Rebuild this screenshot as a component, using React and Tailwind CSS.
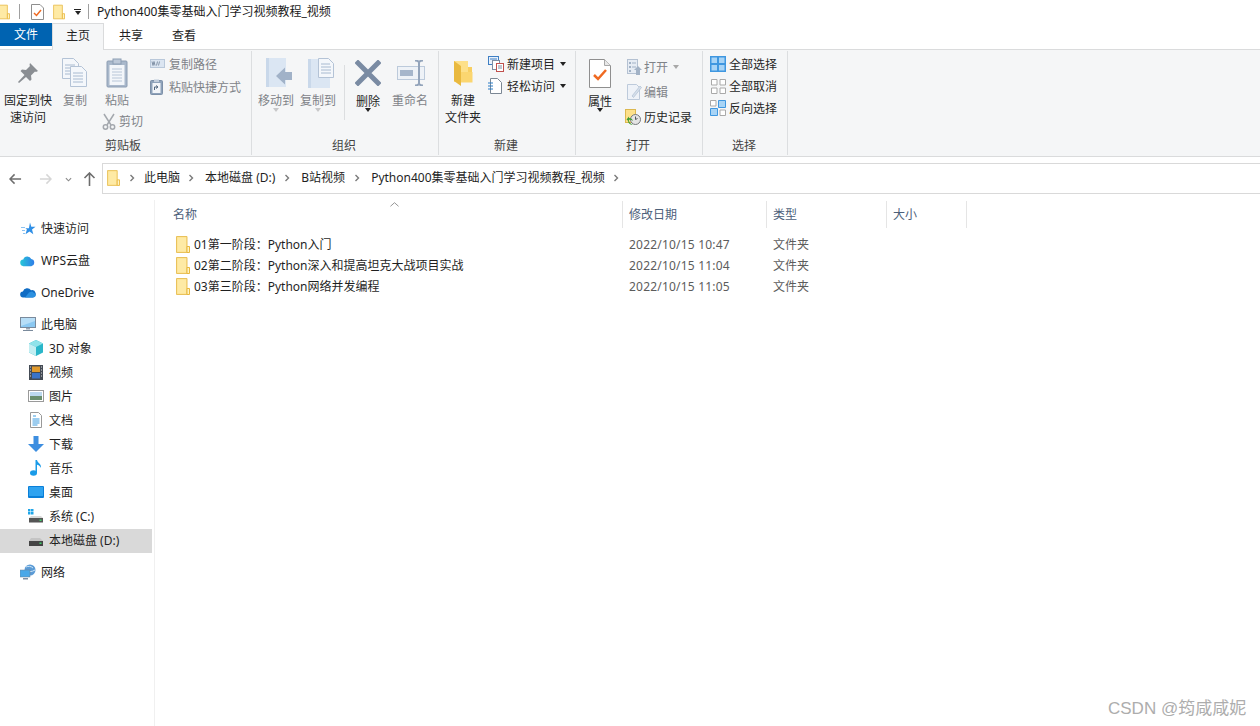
function Folder({ className = "w-[14px] h-[17px]" }) {
  return (
    <svg viewBox="0 0 14 17" className={className}>
      <path d="M.5.5h10.5v16H.5z" fill="#fde08a" stroke="#e9c25c" />
      <path d="M1.5 1.5h8.5v14H1.5z" fill="#feeaa5" />
      <path d="M11 10.5h2.5v6H11z" fill="#fff3c4" stroke="#e9b93f" />
    </svg>
  );
}
function Pin() {
  return (
    <svg viewBox="0 0 22 22" className="w-[22px] h-[22px]">
      <path d="M13 1l8 8-2 1-1-.5-4 4 .5 4-1.500 1.500-4-4L2 21l-1-1 6.500-7-4-4L5 7.500l4 .5 4-4-.5-1z" fill="#8a8e93" />
    </svg>
  );
}
function DocLines({ x, y }) {
  return (
    <g>
      <path d={`M${x}.5 ${y}.5h11l5 5v15h-16z`} fill="#f4f7fb" stroke="#b4c3d6" />
      <path d={`M${x + 3} ${y + 7}h10M${x + 3} ${y + 10}h10M${x + 3} ${y + 13}h10M${x + 3} ${y + 16}h10`} stroke="#a8bad0" />
    </g>
  );
}
function CopyIcon() {
  return (
    <svg viewBox="0 0 26 30" className="w-[26px] h-[30px]">
      <DocLines x={0} y={0} />
      <DocLines x={8} y={8} />
    </svg>
  );
}
function PasteIcon() {
  return (
    <svg viewBox="0 0 22 30" className="w-[22px] h-[30px]">
      <rect x="1" y="3" width="20" height="26" rx="1" fill="#a9b8cb" stroke="#8c9db3" />
      <rect x="3.500" y="7" width="15" height="20" fill="#f3f6fa" />
      <path d="M6 11h10M6 14h10M6 17h10M6 20h10M6 23h10" stroke="#b8c6d8" />
      <rect x="7" y="1" width="8" height="5" fill="#bcc8d8" stroke="#8c9db3" />
    </svg>
  );
}
function Scissors() {
  return (
    <svg viewBox="0 0 14 17" className="w-[14px] h-[17px]" fill="none" stroke="#a4a8ae" strokeWidth="1.500">
      <path d="M2 1l7 11M12 1L5 12" />
      <circle cx="3.500" cy="14" r="2.200" />
      <circle cx="10.500" cy="14" r="2.200" />
    </svg>
  );
}
function PathIcon() {
  return (
    <svg viewBox="0 0 15 10" className="w-[15px] h-[10px]">
      <rect x=".5" y=".5" width="14" height="8" fill="#dbe5f1" stroke="#b9c8da" />
      <path d="M2 2.500l1 4 1-4 1 4M6.500 6.500l1-4M8.500 6.500l1-4" stroke="#6d7f95" fill="none" strokeWidth=".8" />
    </svg>
  );
}
function ShortcutIcon() {
  return (
    <svg viewBox="0 0 13 16" className="w-[13px] h-[16px]">
      <rect x=".5" y="1.500" width="12" height="14" rx="1" fill="#8ea2ba" stroke="#7d90a8" />
      <rect x="2.500" y="4" width="8" height="10" fill="#f2f5f9" />
      <rect x="4" y=".5" width="5" height="2.500" fill="#c0ccdb" />
      <path d="M4.500 11V8h3M6 6.500L8 8 6 9.500" stroke="#51667f" fill="none" />
    </svg>
  );
}
function MoveIcon() {
  return (
    <svg viewBox="0 0 26 30" className="w-[26px] h-[30px]">
      <path d="M0 0h20v29H0z" fill="#dbe6f3" />
      <path d="M0 0h3v29H0z" fill="#c9d8ea" />
      <path d="M10 20l9-8.500V16h7v8h-7v4.500z" transform="translate(0 -2)" fill="#a1b2c8" />
    </svg>
  );
}
function CopyToIcon() {
  return (
    <svg viewBox="0 0 26 30" className="w-[26px] h-[30px]">
      <path d="M0 1h22v29H0z" fill="#dbe6f3" />
      <path d="M0 1h3v29H0z" fill="#c9d8ea" />
      <path d="M10.500.5h10l5 5v14h-15z" fill="#f4f7fb" stroke="#b4c3d6" />
      <path d="M13 6h9M13 9h10M13 12h10M13 15h10" stroke="#a8bad0" />
    </svg>
  );
}
function DeleteX() {
  return (
    <svg viewBox="0 0 26 26" className="w-[26px] h-[26px]">
      <path d="M3 3l20 20M23 3L3 23" stroke="#7a8ba3" strokeWidth="5" strokeLinecap="square" />
    </svg>
  );
}
function RenameIcon() {
  return (
    <svg viewBox="0 0 29 26" className="w-[29px] h-[26px]">
      <rect x=".5" y="6.500" width="27" height="13" fill="#eef2f7" stroke="#bccadb" />
      <rect x="3" y="10" width="13" height="6" fill="#a6b6cb" />
      <path d="M18 .5c2 0 3 .5 4 1.500 1-1 2-1.500 4-1.500M18 25.500c2 0 3-.5 4-1.500 1 1 2 1.500 4 1.500M22 2v22" stroke="#93a4bb" strokeWidth="2" fill="none" />
    </svg>
  );
}
function BigFolder() {
  return (
    <svg viewBox="0 0 20 27" className="w-[20px] h-[27px]">
      <path d="M1 1h12l1 6h5v15H9z" fill="#f8cf62" />
      <path d="M1 1h14v21H1z" fill="#fde08a" />
      <path d="M1 1l7 5v20l-7-5z" fill="#e9b93f" />
      <path d="M8 12h11.500v10.500H8z" fill="#fbd670" />
    </svg>
  );
}
function NewItemIcon() {
  return (
    <svg viewBox="0 0 16 16" className="w-[16px] h-[16px]">
      <rect x=".5" y=".5" width="10" height="8" fill="#e8f1fb" stroke="#3f7fc4" />
      <path d="M2 3h7" stroke="#3f7fc4" />
      <rect x="4.500" y="4.500" width="7" height="9" fill="#fff" stroke="#7d8ea3" />
      <rect x="8.500" y="7.500" width="7" height="8" fill="#fff" stroke="#c0504d" />
      <path d="M10 10h4M10 12h4" stroke="#7d8ea3" />
    </svg>
  );
}
function EasyIcon() {
  return (
    <svg viewBox="0 0 14 16" className="w-[14px] h-[16px]">
      <path d="M2.500.5h7l4 4v11h-11z" fill="#fff" stroke="#7b8794" />
      <path d="M0 5h5M0 8h5M0 11h5" stroke="#2a7cc7" />
    </svg>
  );
}
function Properties() {
  return (
    <svg viewBox="0 0 22 29" className="w-[22px] h-[29px]">
      <path d="M.5.500h15l6 6v22H.5z" fill="#fff" stroke="#8f8f8f" />
      <path d="M15.500.500v6h6" fill="#e8e8e8" stroke="#a8a8a8" />
      <path d="M5 16l4 4 8-9" stroke="#ef6a22" strokeWidth="2.500" fill="none" />
    </svg>
  );
}
function OpenIcon() {
  return (
    <svg viewBox="0 0 15 16" className="w-[15px] h-[16px]">
      <rect x=".5" y=".5" width="10" height="14" fill="#e6ecf4" stroke="#b4c1d2" />
      <path d="M2 3h2v2H2zM2 7h2v2H2zM2 11h2v2H2z" fill="#a2b2c6" />
      <path d="M5 4h4M5 8h4" stroke="#a2b2c6" />
      <path d="M11 7l4 4h-2v5h-4v-5H7z" fill="#a2b2c6" />
    </svg>
  );
}
function EditIcon() {
  return (
    <svg viewBox="0 0 15 16" className="w-[15px] h-[16px]">
      <path d="M.5.500h9l3 3v12H.5z" fill="#eef2f8" stroke="#bdcadb" />
      <path d="M5 12l8-10 1.500 1.500-8 10z" fill="#d5dfeb" stroke="#a8b8cc" strokeWidth=".6" />
    </svg>
  );
}
function HistoryIcon() {
  return (
    <svg viewBox="0 0 16 16" className="w-[16px] h-[16px] ml-[-2px]">
      <rect x=".5" y=".5" width="10" height="13" fill="#fde08a" stroke="#dcb850" />
      <circle cx="10.500" cy="10.500" r="5" fill="#e4e4e4" stroke="#77797c" />
      <path d="M10.500 7.500v3l2-1" stroke="#55585c" fill="none" />
      <path d="M1.500 10.500l2.500-3v1.500c2 0 3.500 1 4 3-1-1-2.500-1.300-4-1.200V12.500z M4 12c.5 2 2 3 4 3.500-2 .5-4.500-.5-5-3z" fill="#3f9c35" />
    </svg>
  );
}
function SelectAll() {
  return (
    <svg viewBox="0 0 16 16" className="w-[16px] h-[16px]">
      <path d="M0 0h16v16H0z" fill="#3f97e0" />
      <path d="M1.500 1.500h5.500v5.500H1.500zM9 1.500h5.500v5.500H9zM1.500 9h5.500v5.500H1.500zM9 9h5.500v5.500H9z" fill="#a8d4f6" />
    </svg>
  );
}
function SelectNone() {
  return (
    <svg viewBox="0 0 15 15" className="w-[15px] h-[15px]" fill="#fff" stroke="#a9a9a9">
      <path d="M.5.500h5.500v5.500H.5zM9 .500h5.500v5.500H9zM.5 9h5.500v5.500H.5zM9 9h5.500v5.500H9z" />
    </svg>
  );
}
function SelectInvert() {
  return (
    <svg viewBox="0 0 16 16" className="w-[16px] h-[16px]">
      <path d="M.5.500h5.500v5.500H.5z" fill="#fff" stroke="#a9a9a9" />
      <path d="M8.500.500h7v7h-7zM.5 8.500h7v7h-7z" fill="#a8d4f6" stroke="#3f97e0" />
      <path d="M10 10h5.500v5.500H10z" fill="#fff" stroke="#a9a9a9" />
    </svg>
  );
}
function Caret({ disabled }) {
  return <span className={`block w-0 h-0 border-x-[3.5px] border-x-transparent border-t-[4px] ${disabled ? "border-t-[#a8a8a8]" : "border-t-[#222]"}`} />;
}
function Big({ w, icon, lines, disabled, caret, textPt = "mt-[1px]", iconClass = "" }) {
  return (
    <div className={`${w} flex flex-col items-center`}>
      <div className={`h-[36px] flex items-center justify-center ${iconClass}`}>{icon}</div>
      <div className={`flex flex-col items-center leading-[17px] ${textPt} ${disabled ? "text-[#7f8388]" : "text-[#262626]"}`}>
        {lines.map((l) => <span key={l} className="whitespace-nowrap">{l}</span>)}
      </div>
      {caret && <div className={disabled ? "mt-[-1px] opacity-60" : "mt-[-2px]"}><Caret disabled={disabled} /></div>}
    </div>
  );
}
function Small({ icon, text, disabled, caret, iconW = "w-[19px]", h = "h-[22px]" }) {
  return (
    <div className={`${h} flex items-center whitespace-nowrap ${disabled ? "text-[#7f8388]" : "text-[#262626]"}`}>
      <span className={`${iconW} flex items-center shrink-0`}>{icon}</span>
      <span>{text}</span>
      {caret && <span className="ml-[5px]"><Caret disabled={disabled} /></span>}
    </div>
  );
}
function Group({ w, label, children, labelClass = "justify-center" }) {
  return (
    <div className={`${w} shrink-0 flex flex-col border-r border-[#dcdee0] my-[1px]`}>
      <div className="h-[83px] flex pt-[4px]">{children}</div>
      <div className={`h-[20px] pt-[2px] flex items-center text-[#444] ${labelClass}`}>{label}</div>
    </div>
  );
}
function Chevron({ className = "" }) {
  return (
    <svg viewBox="0 0 6 8" className={`w-[6px] h-[8px] shrink-0 ${className}`} fill="none" stroke="#7a7a7a" strokeWidth="1.400">
      <path d="M1.500 1l3 3-3 3" />
    </svg>
  );
}
const sideIcons = {
  star: (
    <svg viewBox="0 0 16 14" className="w-[16px] h-[15px]">
      <path d="M10 1l1.300 4.300H15.500l-3.500 2.700 1.300 4.700-3.800-2.800-4 2.800 1.400-4.700-1.500-1.200h3.500z" fill="#2f8fe6" />
      <path d="M1 6h4M2 9h3M3 12h2" stroke="#8ac1f0" />
    </svg>
  ),
  wps: (
    <svg viewBox="0 0 16 12" className="w-[15px] h-[13px]">
      <defs><linearGradient id="w" x1="0" x2="1"><stop offset="0" stopColor="#27c7d8" /><stop offset="1" stopColor="#2f7de8" /></linearGradient></defs>
      <path d="M4 12a3.500 3.500 0 0 1-.5-7A4.500 4.500 0 0 1 12 4.500a3.800 3.800 0 0 1 0 7.500z" fill="url(#w)" />
    </svg>
  ),
  onedrive: (
    <svg viewBox="0 0 16 10" className="w-[16px] h-[11px]">
      <path d="M3.500 10a3 3 0 0 1-.6-6A4.500 4.500 0 0 1 11 2.800a3.700 3.700 0 0 1 2 7.200z" fill="#0f6cc4" />
      <path d="M5 10l4-5 3-1 3.500 2.500c.8 1.800-.5 3.500-2.500 3.500z" fill="#2b90e0" />
    </svg>
  ),
  pc: (
    <svg viewBox="0 0 16 14" className="w-[16px] h-[14px]">
      <rect x=".5" y=".5" width="15" height="10" fill="#8cc9f2" stroke="#7a8a9c" />
      <path d="M1 1h14v3L1 9z" fill="#b7def7" />
      <path d="M6 11h4v1.500H6z" fill="#9aa7b5" />
      <path d="M3 13h10v1H3z" fill="#7a8a9c" />
    </svg>
  ),
  cube: (
    <svg viewBox="0 0 16 16" className="w-[16px] h-[16px]">
      <path d="M8 0l7 3.500v9L8 16l-7-3.500v-9z" fill="#2ab6c9" />
      <path d="M8 0l7 3.500L8 7 1 3.500z" fill="#8fe3ea" />
      <path d="M1 3.500L8 7v9l-7-3.500z" fill="#c2eef2" />
    </svg>
  ),
  video: (
    <svg viewBox="0 0 14 15" className="w-[14px] h-[15px] ml-[1px]">
      <rect width="14" height="15" fill="#444b55" />
      <rect x="3" y="1.500" width="8" height="5.500" fill="#e09a2d" />
      <rect x="3" y="8" width="8" height="5.500" fill="#3b74c9" />
      <path d="M1 2h1M1 5h1M1 8h1M1 11h1M12 2h1M12 5h1M12 8h1M12 11h1" stroke="#ddd" />
    </svg>
  ),
  picture: (
    <svg viewBox="0 0 16 12" className="w-[16px] h-[12px]">
      <rect x=".5" y=".5" width="15" height="11" fill="#fff" stroke="#9a9a9a" />
      <rect x="2" y="2" width="12" height="4" fill="#bcd9ee" />
      <rect x="2" y="6" width="12" height="4" fill="#6a8f6e" />
    </svg>
  ),
  doc: (
    <svg viewBox="0 0 12 16" className="w-[12px] h-[16px] ml-[2px]">
      <path d="M.5.500h8l3 3v12H.5z" fill="#fff" stroke="#999" />
      <path d="M3 4h3M2.500 7h7M2.500 9h7M2.500 11h7M2.500 13h5" stroke="#3b9be0" />
    </svg>
  ),
  down: (
    <svg viewBox="0 0 16 16" className="w-[16px] h-[16px]">
      <path d="M5.500 0h5v8H16l-8 8-8-8h5.500z" fill="#3d8ee0" />
    </svg>
  ),
  music: (
    <svg viewBox="0 0 12 16" className="w-[12px] h-[16px] ml-[2px]">
      <ellipse cx="3.500" cy="13" rx="3.500" ry="2.800" fill="#1a9be8" />
      <path d="M5.500 0h1.500c.5 3 4.500 3.500 4 8-.8-2-2.500-3-4-3.300V13H5.500z" fill="#1a9be8" />
    </svg>
  ),
  desktop: (
    <svg viewBox="0 0 16 12" className="w-[16px] h-[12px]">
      <rect width="16" height="12" rx="1" fill="#0a7fd8" />
      <rect x="1" y="1" width="14" height="9" fill="#2fa3f0" />
    </svg>
  ),
  sys: (
    <svg viewBox="0 0 15 14" className="w-[15px] h-[14px]">
      <path d="M0 0h2.500v2.500H0zM3 0h2.500v2.500H3zM0 3h2.500v2.500H0zM3 3h2.500v2.500H3z" fill="#1fa5e8" />
      <path d="M1 9l2-2h10l2 2z" fill="#d8d8d8" />
      <rect x="1" y="9" width="14" height="4.500" fill="#555" />
      <rect x="11.500" y="10.500" width="2" height="1.500" fill="#3fd26b" />
    </svg>
  ),
  disk: (
    <svg viewBox="0 0 15 8" className="w-[15px] h-[8px] mt-[3px]">
      <path d="M1 3l2-3h9l3 3z" fill="#c4c4c4" />
      <rect x="1" y="3" width="14" height="5" fill="#444" />
      <rect x="11.500" y="4.500" width="2" height="1.500" fill="#3fd26b" />
    </svg>
  ),
  net: (
    <svg viewBox="0 0 16 16" className="w-[16px] h-[16px]">
      <circle cx="10" cy="6" r="5.500" fill="#5b9bd6" />
      <path d="M6 3c2-1 5-1 7 1M5 7c3 1 7 1 10-1" stroke="#cfe6f7" fill="none" />
      <rect x="0" y="6" width="10" height="7" fill="#4aa8e8" stroke="#6d8195" strokeWidth=".5" />
      <path d="M3 14h5v1.500H3z" fill="#7d8ea3" />
    </svg>
  ),
};
function Nav({ icon, text, sub, active }) {
  return (
    <div className={`h-[24px] w-[152px] pb-[2px] flex items-center ${active ? "bg-[#d9d9d9]" : ""}`}>
      <span className={`${sub ? "ml-[28px] w-[21px]" : "ml-[20px] w-[21px]"} flex items-center shrink-0`}>{icon}</span>
      <span className="text-[#1f1f1f] whitespace-pre">{text}</span>
    </div>
  );
}
function Head({ w, children }) {
  return (
    <div className={`${w} h-[27px] shrink-0 flex items-center pl-[6px] border-r border-[#e5e5e5] text-[#4c607a]`}>{children}</div>
  );
}
function Row({ name, date }) {
  return (
    <div className="h-[21px] flex items-center text-[#5c5c5c] whitespace-nowrap">
      <div className="w-[468px] shrink-0 flex items-center pl-[21px]">
        <span className="w-[18px] shrink-0 flex"><Folder /></span>
        <span className="text-[#1f1f1f]">{name}</span>
      </div>
      <div className="w-[144px] shrink-0 pl-[6px] tracking-[0.2px]">{date}</div>
      <div className="pl-[6px]">文件夹</div>
    </div>
  );
}

export default function App() {
  return (
    <div className="relative w-[1260px] h-[726px] overflow-hidden bg-white text-[12px] leading-[17px] text-[#222] font-['Noto_Sans','Noto_Sans_CJK_SC',sans-serif]">
      {/* title bar */}
      <div className="h-[23px] flex items-center">
        <div className="ml-[-2px] w-[12px] flex"><Folder className="w-[12px] h-[16px]" /></div>
        <div className="ml-[9px] w-px h-[15px] bg-[#a0a0a0]" />
        <svg viewBox="0 0 13 16" className="ml-[11px] w-[13px] h-[16px]">
          <path d="M.5.500h8.500l3.500 3.500v11.500H.5z" fill="#fff" stroke="#8f8f8f" />
          <path d="M3 9l2.500 2.500L10 6" stroke="#ef6a22" strokeWidth="1.500" fill="none" />
        </svg>
        <div className="ml-[9px] flex"><Folder className="w-[12px] h-[16px]" /></div>
        <div className="ml-[9px] flex flex-col items-center gap-[1px]">
          <span className="w-[7px] h-px bg-[#222]" />
          <Caret />
        </div>
        <div className="ml-[7px] w-px h-[15px] bg-[#a0a0a0]" />
        <div className="ml-[8px] text-[#1a1a1a] whitespace-nowrap">Python400集零基础入门学习视频教程_视频</div>
      </div>
      {/* tabs */}
      <div className="h-[27px] flex border-b border-[#dadbdc]">
        <div className="w-[52px] h-[23px] bg-[#0063b1] text-white flex items-center justify-center">文件</div>
        <div className="w-[52px] h-[27px] bg-[#f5f6f7] border-x border-t border-[#dadbdc] flex items-center justify-center pb-[3px] text-[#1f1f1f]">主页</div>
        <div className="ml-[15px] w-[24px] pt-[4px] text-[#1f1f1f]">共享</div>
        <div className="ml-[29px] w-[24px] pt-[4px] text-[#1f1f1f]">查看</div>
      </div>
      {/* ribbon */}
      <div className="h-[107px] flex bg-[#f5f6f7] border-b border-[#dadbdc]">
        <Group w="w-[252px]" label="剪贴板" labelClass="pl-[105px]">
          <div className="ml-[3px]"><Big w="w-[50px]" icon={<Pin />} lines={["固定到快", "速访问"]} /></div>
          <Big w="w-[44px]" icon={<CopyIcon />} lines={["复制"]} disabled />
          <div className="w-[46px] flex flex-col items-start">
            <Big w="w-[40px]" icon={<PasteIcon />} lines={["粘贴"]} disabled />
            <div className="mt-[1px] ml-[5px]"><Small icon={<Scissors />} text="剪切" disabled iconW="w-[17px]" /></div>
          </div>
          <div className="ml-[7px] flex flex-col gap-[1px] mt-[-2px]">
            <Small icon={<PathIcon />} text="复制路径" disabled />
            <Small icon={<ShortcutIcon />} text="粘贴快捷方式" disabled />
          </div>
        </Group>
        <Group w="w-[187px]" label="组织" labelClass="pl-[80px]">
          <div className="ml-[3px]"><Big w="w-[42px]" icon={<MoveIcon />} lines={["移动到"]} disabled caret iconClass="ml-[6px]" /></div>
          <Big w="w-[42px]" icon={<CopyToIcon />} lines={["复制到"]} disabled caret iconClass="ml-[6px]" />
          <div className="ml-[5px] w-px h-[55px] mt-[10px] bg-[#dcdee0]" />
          <Big w="w-[46px]" icon={<DeleteX />} lines={["删除"]} caret textPt="mt-[2px]" />
          <Big w="w-[38px]" icon={<RenameIcon />} lines={["重命名"]} disabled iconClass="ml-[2px]" />
        </Group>
        <Group w="w-[137px]" label="新建" labelClass="pl-[55px]">
          <div className="ml-[5px]"><Big w="w-[38px]" icon={<BigFolder />} lines={["新建", "文件夹"]} /></div>
          <div className="ml-[6px] flex flex-col mt-[-2px]">
            <Small icon={<NewItemIcon />} text="新建项目" caret iconW="w-[19px]" />
            <Small icon={<EasyIcon />} text="轻松访问" caret iconW="w-[19px]" />
          </div>
        </Group>
        <Group w="w-[127px]" label="打开" labelClass="pl-[50px]">
          <div className="ml-[9px]"><Big w="w-[30px]" icon={<Properties />} lines={["属性"]} caret textPt="mt-[2px]" /></div>
          <div className="ml-[12px] flex flex-col gap-[3px] mt-[1px]">
            <Small icon={<OpenIcon />} text="打开" disabled caret iconW="w-[17px]" />
            <Small icon={<EditIcon />} text="编辑" disabled iconW="w-[17px]" />
            <Small icon={<HistoryIcon />} text="历史记录" iconW="w-[17px]" />
          </div>
        </Group>
        <Group w="w-[85px]" label="选择" labelClass="pl-[29px]">
          <div className="ml-[7px] flex flex-col mt-[-2px]">
            <Small icon={<SelectAll />} text="全部选择" />
            <Small icon={<span className="ml-[1px] flex"><SelectNone /></span>} text="全部取消" />
            <Small icon={<SelectInvert />} text="反向选择" />
          </div>
        </Group>
      </div>
      {/* address */}
      <div className="h-[32px] mt-[6px] flex items-center">
        <svg viewBox="0 0 14 12" className="ml-[9px] w-[13px] h-[12px]" fill="none" stroke="#6d6d6d" strokeWidth="1.600">
          <path d="M6 1L1 6l5 5M1 6h12" />
        </svg>
        <svg viewBox="0 0 14 12" className="ml-[17px] w-[13px] h-[12px]" fill="none" stroke="#d6d6d6" strokeWidth="1.600">
          <path d="M8 1l5 5-5 5M13 6H1" />
        </svg>
        <svg viewBox="0 0 8 5" className="ml-[13px] w-[7px] h-[5px]" fill="none" stroke="#8a8a8a" strokeWidth="1.300">
          <path d="M1 1l3 3 3-3" />
        </svg>
        <svg viewBox="0 0 12 14" className="ml-[11px] w-[13px] h-[14px]" fill="none" stroke="#6d6d6d" strokeWidth="1.600">
          <path d="M1 6l5-5 5 5M6 1v13" />
        </svg>
        <div className="ml-[6px] flex-1 h-[31px] self-start border border-r-0 border-[#d9d9d9] flex items-center pl-[4px] pb-[2px] text-[#1f1f1f] whitespace-nowrap">
          <Folder className="w-[13px] h-[16px]" />
          <Chevron className="ml-[9px]" />
          <span className="ml-[9px]">此电脑</span>
          <Chevron className="ml-[8px]" />
          <span className="ml-[11px]">本地磁盘 (D:)</span>
          <Chevron className="ml-[9px]" />
          <span className="ml-[11px]">B站视频</span>
          <Chevron className="ml-[9px]" />
          <span className="ml-[11px]">Python400集零基础入门学习视频教程_视频</span>
          <Chevron className="ml-[8px]" />
        </div>
      </div>
      {/* body */}
      <div className="h-[531px] mt-[5px] flex">
        <div className="w-[155px] shrink-0 border-r border-[#f0f0f0] pt-[17px] flex flex-col gap-[8px]">
          <Nav icon={sideIcons.star} text="快速访问" />
          <Nav icon={sideIcons.wps} text="WPS云盘" />
          <Nav icon={sideIcons.onedrive} text="OneDrive" />
          <div className="flex flex-col">
            <Nav icon={sideIcons.pc} text="此电脑" />
            <Nav sub icon={sideIcons.cube} text="3D 对象" />
            <Nav sub icon={sideIcons.video} text="视频" />
            <Nav sub icon={sideIcons.picture} text="图片" />
            <Nav sub icon={sideIcons.doc} text="文档" />
            <Nav sub icon={sideIcons.down} text="下载" />
            <Nav sub icon={sideIcons.music} text="音乐" />
            <Nav sub icon={sideIcons.desktop} text="桌面" />
            <Nav sub icon={sideIcons.sys} text="系统 (C:)" />
            <Nav sub active icon={sideIcons.disk} text="本地磁盘 (D:)" />
          </div>
          <Nav icon={sideIcons.net} text="网络" />
        </div>
        <div className="relative flex-1 pt-[1px]">
          <svg viewBox="0 0 10 5" className="absolute left-[235px] top-[2px] w-[9px] h-[5px]" fill="none" stroke="#8a8a8a">
            <path d="M.5 4.500L5 .5l4.500 4" />
          </svg>
          <div className="flex pl-[12px]">
            <Head w="w-[456px]">名称</Head>
            <Head w="w-[144px]">修改日期</Head>
            <Head w="w-[120px]">类型</Head>
            <Head w="w-[80px]">大小</Head>
          </div>
          <div className="mt-[6px]">
            <Row name="01第一阶段：Python入门" date="2022/10/15 10:47" />
            <Row name="02第二阶段：Python深入和提高坦克大战项目实战" date="2022/10/15 11:04" />
            <Row name="03第三阶段：Python网络并发编程" date="2022/10/15 11:05" />
          </div>
        </div>
      </div>
      <div className="absolute left-[1108px] top-[699px] text-[17px] leading-[20px] text-[#adadad] whitespace-nowrap font-['Liberation_Sans','Noto_Sans_CJK_SC',sans-serif]">CSDN @筠咸咸妮</div>
    </div>
  );
}
